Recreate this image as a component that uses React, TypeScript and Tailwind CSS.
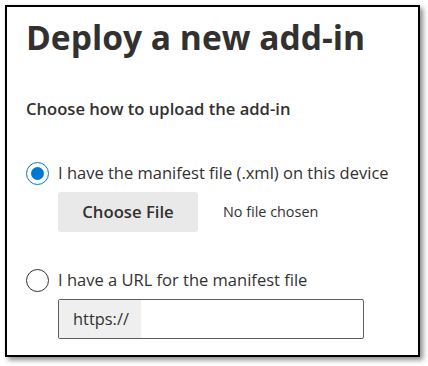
const font = "font-['Open_Sans','Noto_Sans',sans-serif]";

function Radio({ checked }: { checked?: boolean }) {
  return (
    <span
      className={`grid h-[23px] w-[23px] shrink-0 place-items-center rounded-full border ${
        checked ? "border-[#0078d4]" : "border-[#323130]"
      } bg-white`}
    >
      {checked && <span className="h-[13px] w-[13px] rounded-full bg-[#0078d4]" />}
    </span>
  );
}

export default function App() {
  return (
    <div className={`h-[366px] w-[428px] bg-white pl-[5px] pt-[5px] ${font} text-[#323130]`}>
      <div className="h-[352px] w-[415px] border-2 border-black bg-white px-[19px] shadow-[3px_3px_5px_rgba(0,0,0,0.45)]">
        <h1 className="mt-[10px] text-[33.6px] font-bold leading-[40px]">Deploy a new add-in</h1>

        <p className="mt-[40px] text-[16.6px] font-semibold leading-[24px]">
          Choose how to upload the add-in
        </p>

        <label className="mt-[40px] flex items-center gap-[9px] whitespace-nowrap text-[16.5px] leading-[24px]">
          <Radio checked />
          I have the manifest file (.xml) on this device
        </label>
        <div className="ml-[32px] mt-[7px] flex items-center gap-[25px]">
          <button className="h-[40px] w-[140px] rounded-[3px] bg-[#e9e9e9] text-[16.7px] font-semibold">
            Choose File
          </button>
          <span className="text-[14.4px]">No file chosen</span>
        </div>

        <label className="mt-[36px] flex items-center gap-[9px] whitespace-nowrap text-[16.5px] leading-[24px]">
          <Radio />
          I have a URL for the manifest file
        </label>
        <div className="ml-[32px] mt-[7px] flex h-[40px] w-[306px] overflow-hidden rounded-[2px] border border-[#605e5c]">
          <span className="flex w-[82px] items-center bg-[#efefef] pl-[14px] text-[16.4px]">https://</span>
          <input className="min-w-0 flex-1 px-2 outline-none" />
        </div>
      </div>
    </div>
  );
}
